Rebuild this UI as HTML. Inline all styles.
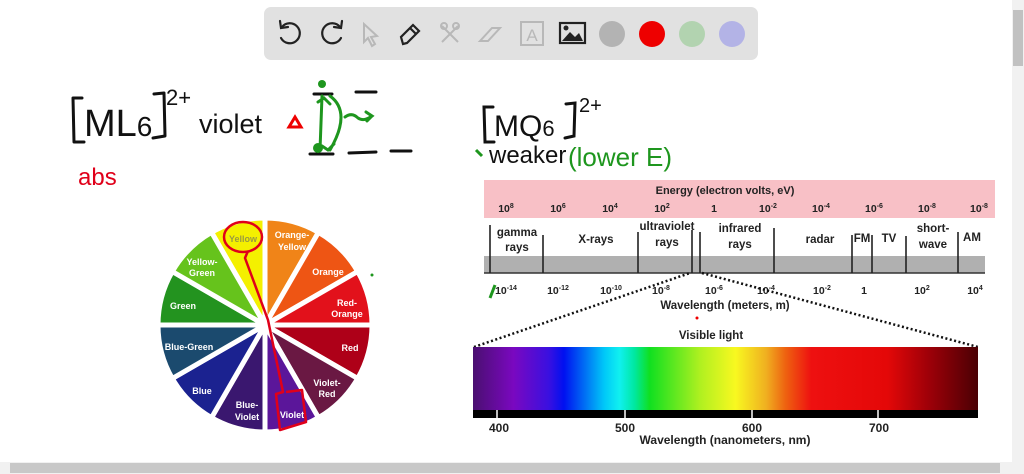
<!DOCTYPE html>
<html><head><meta charset="utf-8"><style>
body{margin:0;width:1024px;height:474px;overflow:hidden;background:#fff;font-family:"Liberation Sans",sans-serif}
svg{position:absolute;left:0;top:0}
</style></head><body>
<svg width="1024" height="474" viewBox="0 0 1024 474" xmlns="http://www.w3.org/2000/svg" font-family="Liberation Sans, sans-serif">
<rect x="264" y="7" width="494" height="53" rx="7" fill="#e1e1e1"/>
<g fill="none" stroke="#222" stroke-width="2.2" stroke-linecap="round">
<path d="M282 27 A10 10 0 1 1 281 38"/><path d="M280 21 L281 28 L288 27"/>
<path d="M340 27 A10 10 0 1 0 341 38"/><path d="M342 21 L341 28 L334 27"/>
<path d="M403 44 L401 37 L413 25 L419 31 L407 43 Z M410 28 L416 34"/>
</g>
<g fill="none" stroke="#b8b8b8" stroke-width="2">
<path d="M364 24 L364 42 L368 38 L372 46 L375 44 L371 37 L377 36 Z"/>
<path d="M442 26 L458 42 M458 26 L442 42"/><circle cx="444" cy="26" r="3"/><circle cx="456" cy="26" r="3"/>
<path d="M480 41 L492 28 L500 28 L488 41 Z"/>
<rect x="521" y="22" width="22" height="23"/>
</g>
<text x="532" y="41" font-size="17" fill="#b8b8b8" text-anchor="middle">A</text>
<rect x="560" y="23" width="25" height="20" fill="none" stroke="#222" stroke-width="2.2"/>
<path d="M562 41 L570 32 L575 37 L579 33 L583 41 Z" fill="#222"/><circle cx="566" cy="28" r="2.5" fill="#222"/>
<circle cx="612" cy="34" r="13" fill="#b3b3b3"/>
<circle cx="652" cy="34" r="13" fill="#ee0000"/>
<circle cx="692" cy="34" r="13" fill="#b2d3b0"/>
<circle cx="732" cy="34" r="13" fill="#b3b3e6"/>

<rect x="1012" y="0" width="12" height="462" fill="#f1f1f1"/>
<rect x="1013" y="10" width="10" height="56" fill="#c1c1c1"/>
<rect x="0" y="462" width="1024" height="12" fill="#f1f1f1"/>
<rect x="10" y="463" width="990" height="10" fill="#c8c8c8"/>

<g fill="none" stroke="#111" stroke-width="3" stroke-linecap="round" stroke-linejoin="round">
<path d="M82 98 L73 98 L74 142 L84 142"/>
<path d="M154 94 L164 93 L165 136 L153 138"/>
</g>
<text x="84" y="136" font-size="38" fill="#111">ML<tspan font-size="28">6</tspan></text>
<text x="166" y="105" font-size="22" fill="#111">2+</text>
<text x="199" y="133" font-size="27" fill="#111">violet</text>
<path d="M289 127 L295 117 L301 127 Z" fill="none" stroke="#e00" stroke-width="3"/>
<text x="78" y="185" font-size="24" fill="#e0001a">abs</text>
<g fill="none" stroke="#111" stroke-width="3" stroke-linecap="round">
<path d="M314 94 L332 94 M356 92 L376 92 M310 154 L333 154 M349 153 L376 152 M391 151 L411 151"/>
</g>
<g fill="none" stroke="#1e961e" stroke-width="3" stroke-linecap="round">
<path d="M322 96 L320 150 M324 98 L318 102 M324 98 L330 104 M328 150 L322 146"/>
<path d="M330 96 Q352 112 330 150 M328 150 L334 144"/>
<path d="M345 117 Q352 112 358 118 Q364 122 372 116 L366 112 M372 116 L367 121"/>
</g>
<circle cx="322" cy="84" r="4" fill="#1e961e"/><circle cx="318" cy="148" r="5" fill="#1e961e"/>

<g fill="none" stroke="#111" stroke-width="3" stroke-linecap="round">
<path d="M493 107 L484 107 L485 142 L494 142 M566 104 L575 103 L574 136 L565 138"/>
</g>
<text x="494" y="136" font-size="30" fill="#111">MQ<tspan font-size="22">6</tspan></text>
<text x="579" y="112" font-size="20" fill="#111">2+</text>
<path d="M476 150 L482 156" stroke="#1e961e" stroke-width="3"/>
<text x="489" y="163" font-size="24" fill="#111">weaker</text>
<text x="568" y="166" font-size="26" fill="#1e961e">(lower E)</text>

<g stroke="#fff" stroke-width="5" stroke-linejoin="round">
<path d="M265 325 L211.5 232.3 A107 107 0 0 1 265 218 Z" fill="#f4f000"/>
<path d="M265 325 L265 218 A107 107 0 0 1 318.5 232.3 Z" fill="#f08418"/>
<path d="M265 325 L318.5 232.3 A107 107 0 0 1 357.7 271.5 Z" fill="#ee5514"/>
<path d="M265 325 L357.7 271.5 A107 107 0 0 1 372 325 Z" fill="#e2111b"/>
<path d="M265 325 L372 325 A107 107 0 0 1 357.7 378.5 Z" fill="#ae0018"/>
<path d="M265 325 L357.7 378.5 A107 107 0 0 1 318.5 417.7 Z" fill="#6a1843"/>
<path d="M265 325 L318.5 417.7 A107 107 0 0 1 265 432 Z" fill="#5b169a"/>
<path d="M265 325 L265 432 A107 107 0 0 1 211.5 417.7 Z" fill="#3a176f"/>
<path d="M265 325 L211.5 417.7 A107 107 0 0 1 172.3 378.5 Z" fill="#1b2290"/>
<path d="M265 325 L172.3 378.5 A107 107 0 0 1 158 325 Z" fill="#1b4a6e"/>
<path d="M265 325 L158 325 A107 107 0 0 1 172.3 271.5 Z" fill="#23931f"/>
<path d="M265 325 L172.3 271.5 A107 107 0 0 1 211.5 232.3 Z" fill="#66c31c"/>
</g>
<circle cx="265" cy="325" r="8" fill="#fff"/>
<g font-size="9" font-weight="bold" fill="#fff" text-anchor="middle">
<text x="243" y="242" fill="#9a9a40">Yellow</text>
<text x="292" y="238">Orange-</text><text x="292" y="250">Yellow</text>
<text x="328" y="275">Orange</text>
<text x="347" y="306">Red-</text><text x="347" y="317">Orange</text>
<text x="350" y="351">Red</text>
<text x="327" y="386">Violet-</text><text x="327" y="397">Red</text>
<text x="292" y="418">Violet</text>
<text x="247" y="408">Blue-</text><text x="247" y="420">Violet</text>
<text x="202" y="394">Blue</text>
<text x="189" y="350">Blue-Green</text>
<text x="183" y="309">Green</text>
<text x="202" y="265">Yellow-</text><text x="202" y="276">Green</text>
</g>
<g fill="none" stroke="#e0001a" stroke-width="2.5" stroke-linejoin="round">
<ellipse cx="243" cy="237" rx="19" ry="15"/>
<path d="M248 251 L245 258 L268 320 L283 392 L276 394 L280 430 L306 422 L302 390 L286 392"/>
</g>
<circle cx="372" cy="275" r="1.5" fill="#1e961e"/>

<rect x="484" y="180" width="511" height="38" fill="#f8c0c6"/>
<text x="725" y="194" font-size="11" font-weight="bold" fill="#222" text-anchor="middle">Energy (electron volts, eV)</text>
<g font-size="10.5" font-weight="bold" fill="#222" text-anchor="middle">
<text x="506" y="212">10<tspan font-size="7" dy="-4">8</tspan></text>
<text x="558" y="212">10<tspan font-size="7" dy="-4">6</tspan></text>
<text x="610" y="212">10<tspan font-size="7" dy="-4">4</tspan></text>
<text x="662" y="212">10<tspan font-size="7" dy="-4">2</tspan></text>
<text x="714" y="212">1</text>
<text x="768" y="212">10<tspan font-size="7" dy="-4">-2</tspan></text>
<text x="821" y="212">10<tspan font-size="7" dy="-4">-4</tspan></text>
<text x="874" y="212">10<tspan font-size="7" dy="-4">-6</tspan></text>
<text x="927" y="212">10<tspan font-size="7" dy="-4">-8</tspan></text>
<text x="979" y="212">10<tspan font-size="7" dy="-4">-8</tspan></text>
</g>
<rect x="484" y="256" width="501" height="17" fill="#b0b0b0"/>
<line x1="484" y1="273" x2="985" y2="273" stroke="#333" stroke-width="1.5"/>
<g stroke="#222" stroke-width="1.6">
<line x1="490" y1="225" x2="490" y2="273"/><line x1="543" y1="235" x2="543" y2="273"/>
<line x1="638" y1="232" x2="638" y2="273"/><line x1="692" y1="230" x2="692" y2="273"/>
<line x1="700" y1="232" x2="700" y2="273"/><line x1="774" y1="228" x2="774" y2="273"/>
<line x1="852" y1="235" x2="852" y2="273"/><line x1="872" y1="235" x2="872" y2="273"/>
<line x1="906" y1="236" x2="906" y2="273"/><line x1="958" y1="232" x2="958" y2="273"/>
</g>
<g font-size="11.5" font-weight="bold" fill="#222" text-anchor="middle">
<text x="517" y="236">gamma</text><text x="517" y="251">rays</text>
<text x="596" y="243">X-rays</text>
<text x="667" y="230">ultraviolet</text><text x="667" y="246">rays</text>
<text x="740" y="232">infrared</text><text x="740" y="248">rays</text>
<text x="820" y="243">radar</text>
<text x="862" y="242">FM</text>
<text x="889" y="242">TV</text>
<text x="933" y="232">short-</text><text x="933" y="248">wave</text>
<text x="972" y="241">AM</text>
</g>
<g font-size="10.5" font-weight="bold" fill="#222" text-anchor="middle">
<text x="506" y="294">10<tspan font-size="7" dy="-4">-14</tspan></text>
<text x="558" y="294">10<tspan font-size="7" dy="-4">-12</tspan></text>
<text x="611" y="294">10<tspan font-size="7" dy="-4">-10</tspan></text>
<text x="661" y="294">10<tspan font-size="7" dy="-4">-8</tspan></text>
<text x="714" y="294">10<tspan font-size="7" dy="-4">-6</tspan></text>
<text x="766" y="294">10<tspan font-size="7" dy="-4">-4</tspan></text>
<text x="822" y="294">10<tspan font-size="7" dy="-4">-2</tspan></text>
<text x="864" y="294">1</text>
<text x="922" y="294">10<tspan font-size="7" dy="-4">2</tspan></text>
<text x="975" y="294">10<tspan font-size="7" dy="-4">4</tspan></text>
</g>
<line x1="490" y1="298" x2="495" y2="285" stroke="#1e961e" stroke-width="3"/>
<text x="725" y="309" font-size="11.5" font-weight="bold" fill="#222" text-anchor="middle">Wavelength (meters, m)</text>
<circle cx="697" cy="318" r="1.5" fill="#e00"/>
<g stroke="#111" stroke-width="2.5" stroke-dasharray="2 2.5" fill="none">
<line x1="474" y1="347" x2="690" y2="273"/>
<line x1="702" y1="273" x2="978" y2="347"/>
</g>
<text x="711" y="339" font-size="11.5" font-weight="bold" fill="#222" text-anchor="middle">Visible light</text>
<defs><linearGradient id="sp" x1="0" x2="1">
<stop offset="0" stop-color="#4a0f70"/><stop offset="0.08" stop-color="#7a08c0"/><stop offset="0.15" stop-color="#3a10e0"/>
<stop offset="0.18" stop-color="#0010f0"/><stop offset="0.26" stop-color="#00c8f8"/><stop offset="0.29" stop-color="#10f0f0"/>
<stop offset="0.32" stop-color="#00e8a0"/><stop offset="0.35" stop-color="#10e020"/><stop offset="0.45" stop-color="#b0f020"/>
<stop offset="0.52" stop-color="#f8f820"/><stop offset="0.58" stop-color="#f0b020"/><stop offset="0.62" stop-color="#ee6010"/>
<stop offset="0.67" stop-color="#ee1010"/><stop offset="0.82" stop-color="#e40808"/><stop offset="0.9" stop-color="#a00008"/>
<stop offset="1" stop-color="#4a0004"/></linearGradient></defs>
<rect x="473" y="347" width="505" height="63" fill="url(#sp)"/>
<rect x="473" y="410" width="505" height="8" fill="#000"/>
<g stroke="#fff" stroke-width="1.5"><line x1="497" y1="410" x2="497" y2="418"/><line x1="625" y1="410" x2="625" y2="418"/><line x1="752" y1="410" x2="752" y2="418"/><line x1="878" y1="410" x2="878" y2="418"/></g>
<g font-size="12" font-weight="bold" fill="#222" text-anchor="middle">
<text x="499" y="432">400</text><text x="625" y="432">500</text><text x="752" y="432">600</text><text x="879" y="432">700</text>
</g>
<text x="725" y="444" font-size="12" font-weight="bold" fill="#222" text-anchor="middle">Wavelength (nanometers, nm)</text>
</svg>
</body></html>
